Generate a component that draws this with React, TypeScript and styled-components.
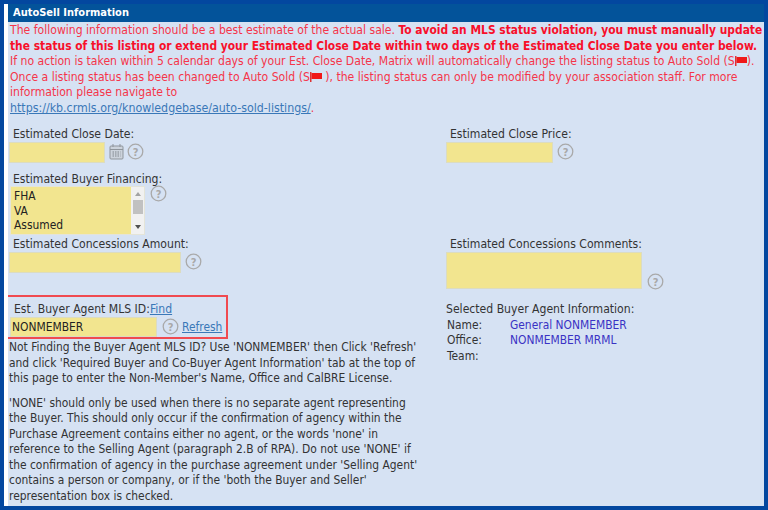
import React from 'react';
import styled, { createGlobalStyle } from 'styled-components';

const GlobalStyle = createGlobalStyle`
  html, body {
    margin: 0;
    padding: 0;
    background: #03479f;
  }
  body {
    width: 768px;
    height: 510px;
    overflow: hidden;
    font-family: "DejaVu Sans Condensed", "DejaVu Sans", Verdana, sans-serif;
    font-stretch: condensed;
    font-size: 11.9px;
    color: #333;
  }
`;

const Frame = styled.div`
  height: 510px;
  box-sizing: border-box;
  padding: 4px 4px 4px 4px;
`;

const Panel = styled.div`
  height: 502px;
  box-sizing: border-box;
  border-left: 4px solid #fff;
  background: #d6e2f3;
  overflow: hidden;
`;

const Header = styled.div`
  height: 18px;
  line-height: 18px;
  padding-left: 5px;
  background: #03539a;
  color: #fff;
  font-weight: 700;
  font-size: 11px;
`;

const Notice = styled.div`
  padding: 1px 0 0 2px;
  color: #f5354a;
  font-size: 12.1px;
  line-height: 15.5px;
  white-space: nowrap;
`;

const Strong = styled.b`
  color: #f80f2a;
  font-size: 11.9px;
`;

const Flag = styled.svg`
  width: 12px;
  height: 10px;
  vertical-align: -1px;
`;

const Url = styled.a`
  color: #3a78b8;
  font-size: 12.3px;
  text-decoration: underline;
`;

const Form = styled.div`
  display: grid;
  grid-template-columns: 437px minmax(0, 1fr);
  padding: 10px 0 0 1px;
`;

const Field = styled.div<{ $h: number }>`
  height: ${(p) => p.$h}px;
`;

const Label = styled.div`
  padding: 1px 0 0 4px;
  font-size: 12.1px;
  line-height: 15px;
`;

const InputRow = styled.div`
  display: flex;
  align-items: flex-start;
  gap: 3px;
`;

const Input = styled.div<{ $w: number; $h?: number }>`
  width: ${(p) => p.$w}px;
  height: ${(p) => p.$h ?? 21}px;
  box-sizing: border-box;
  background: #f2e58f;
  border: 1px solid #dcdcc0;
  padding-left: 1px;
  line-height: 18px;
  color: #222;
`;

const Listbox = styled.div`
  width: 135px;
  height: 49px;
  margin: -1px 0 0 1px;
  display: flex;
  background: #f2e58f;
  border: 1px solid #e4e4d8;
  box-sizing: border-box;
`;

const Options = styled.div`
  flex: 1;
  padding: 2px 0 0 3px;
  line-height: 14.5px;
  color: #222;
`;

const Scrollbar = styled.div`
  width: 13px;
  background: #f1f1f1;
  position: relative;
`;

const Thumb = styled.div`
  position: absolute;
  top: 13px;
  left: 2px;
  width: 10px;
  height: 14px;
  background: #c1c1c1;
`;

const Arrow = styled.div<{ $down?: boolean }>`
  position: absolute;
  left: 4px;
  ${(p) => (p.$down ? 'bottom: 5px;' : 'top: 5px;')}
  border-left: 3px solid transparent;
  border-right: 3px solid transparent;
  ${(p) => (p.$down ? 'border-top: 4px solid #505050;' : 'border-bottom: 4px solid #a3a3a3;')}
`;

const HelpIcon = styled.svg<{ $top?: number; $left?: number }>`
  width: 17px;
  height: 17px;
  margin-top: ${(p) => p.$top ?? 1}px;
  margin-left: ${(p) => p.$left ?? 0}px;
  flex: none;
`;

const CalIcon = styled.svg`
  width: 15px;
  height: 17px;
  margin-top: 1px;
  margin-left: 1px;
  flex: none;
`;

const AgentBox = styled.div`
  width: 222px;
  height: 44px;
  box-sizing: border-box;
  margin: 0 0 0 -3px;
  padding: 4px 0 0 2px;
  border: 2px solid #f04a50;
`;

const Link = styled.a`
  color: #3a78b8;
  text-decoration: underline;
`;

const RefreshLink = styled(Link)`
  margin-top: 3px;
`;

const Copy = styled.div`
  padding-top: 1px;
  line-height: 15.5px;
  white-space: nowrap;
`;

const Para = styled.p`
  margin: 0 0 9px;
`;

const AgentInfo = styled.div`
  padding-top: 7px;
  line-height: 15.5px;
`;

const AgentTitle = styled.div`
  font-size: 12.1px;
`;

const InfoRow = styled.div`
  display: flex;
  padding-left: 1px;
`;

const InfoKey = styled.span`
  width: 63px;
`;

const InfoValue = styled.span`
  color: #3a32c4;
`;

const Help = ({ top, left }: { top?: number; left?: number }) => (
  <HelpIcon $top={top} $left={left} viewBox="0 0 17 17">
    <circle cx="8.5" cy="8.5" r="7.3" fill="none" stroke="#a9a9a9" strokeWidth="1.3" />
    <text x="8.5" y="12.6" textAnchor="middle" fontSize="11" fontWeight="700" fill="#a9a9a9">
      ?
    </text>
  </HelpIcon>
);

const RedFlag = () => (
  <Flag viewBox="0 0 12 10">
    <rect x="0" y="0" width="1.5" height="10" fill="#d33" />
    <rect x="1.5" y="1" width="10.5" height="6" fill="#f01818" />
  </Flag>
);

const App: React.FC = () => {
  return (
    <Frame>
      <GlobalStyle />
      <Panel>
        <Header>AutoSell Information</Header>
        <Notice>
          The following information should be a best estimate of the actual sale.{' '}
          <Strong>To avoid an MLS status violation, you must manually update</Strong>
          <br />
          <Strong>the status of this listing or extend your Estimated Close Date within two days of the Estimated Close Date you enter below.</Strong>
          <br />
          If no action is taken within 5 calendar days of your Est. Close Date, Matrix will automatically change the listing status to Auto Sold (S<RedFlag />).
          <br />
          Once a listing status has been changed to Auto Sold (S<RedFlag /> ), the listing status can only be modified by your association staff. For more
          <br />
          information please navigate to
          <br />
          <Url href="#">https://kb.crmls.org/knowledgebase/auto-sold-listings/</Url>.
        </Notice>
        <Form>
          <Field $h={45}>
            <Label>Estimated Close Date:</Label>
            <InputRow>
              <Input $w={96} />
              <CalIcon viewBox="0 0 15 17">
                <rect x="1" y="3" width="13" height="13" rx="1" fill="#ccd3dc" stroke="#8f959c" />
                <path d="M1 6.5h13M4 1v3M11 1v3" stroke="#8f959c" fill="none" />
                <path d="M3.5 9h8M3.5 11h8M3.5 13h8" stroke="#7f858c" strokeDasharray="1.5 1" fill="none" />
              </CalIcon>
              <Help />
            </InputRow>
          </Field>
          <Field $h={45}>
            <Label>Estimated Close Price:</Label>
            <InputRow>
              <Input $w={107} />
              <Help left={1} />
            </InputRow>
          </Field>
          <Field $h={65}>
            <Label>Estimated Buyer Financing:</Label>
            <InputRow>
              <Listbox>
                <Options>
                  FHA
                  <br />
                  VA
                  <br />
                  Assumed
                </Options>
                <Scrollbar>
                  <Arrow />
                  <Thumb />
                  <Arrow $down />
                </Scrollbar>
              </Listbox>
              <Help top={-2} left={2} />
            </InputRow>
          </Field>
          <div />
          <Field $h={59}>
            <Label>Estimated Concessions Amount:</Label>
            <InputRow>
              <Input $w={172} />
              <Help left={1} />
            </InputRow>
          </Field>
          <Field $h={59}>
            <Label>Estimated Concessions Comments:</Label>
            <InputRow>
              <Input $w={196} $h={37} />
              <Help top={21} left={2} />
            </InputRow>
          </Field>
          <div>
            <AgentBox>
              <Label>
                Est. Buyer Agent MLS ID:<Link href="#">Find</Link>
              </Label>
              <InputRow>
                <Input $w={147} $h={20}>NONMEMBER</Input>
                <Help left={2} />
                <RefreshLink href="#">Refresh</RefreshLink>
              </InputRow>
            </AgentBox>
            <Copy>
              <Para>
                Not Finding the Buyer Agent MLS ID? Use 'NONMEMBER' then Click 'Refresh'
                <br />
                and click 'Required Buyer and Co-Buyer Agent Information' tab at the top of
                <br />
                this page to enter the Non-Member's Name, Office and CalBRE License.
              </Para>
              <Para>
                'NONE' should only be used when there is no separate agent representing
                <br />
                the Buyer. This should only occur if the confirmation of agency within the
                <br />
                Purchase Agreement contains either no agent, or the words 'none' in
                <br />
                reference to the Selling Agent (paragraph 2.B of RPA). Do not use 'NONE' if
                <br />
                the confirmation of agency in the purchase agreement under 'Selling Agent'
                <br />
                contains a person or company, or if the 'both the Buyer and Seller'
                <br />
                representation box is checked.
              </Para>
            </Copy>
          </div>
          <AgentInfo>
            <AgentTitle>Selected Buyer Agent Information:</AgentTitle>
            <InfoRow>
              <InfoKey>Name:</InfoKey>
              <InfoValue>General NONMEMBER</InfoValue>
            </InfoRow>
            <InfoRow>
              <InfoKey>Office:</InfoKey>
              <InfoValue>NONMEMBER MRML</InfoValue>
            </InfoRow>
            <InfoRow>
              <InfoKey>Team:</InfoKey>
            </InfoRow>
          </AgentInfo>
        </Form>
      </Panel>
    </Frame>
  );
};

export default App;
